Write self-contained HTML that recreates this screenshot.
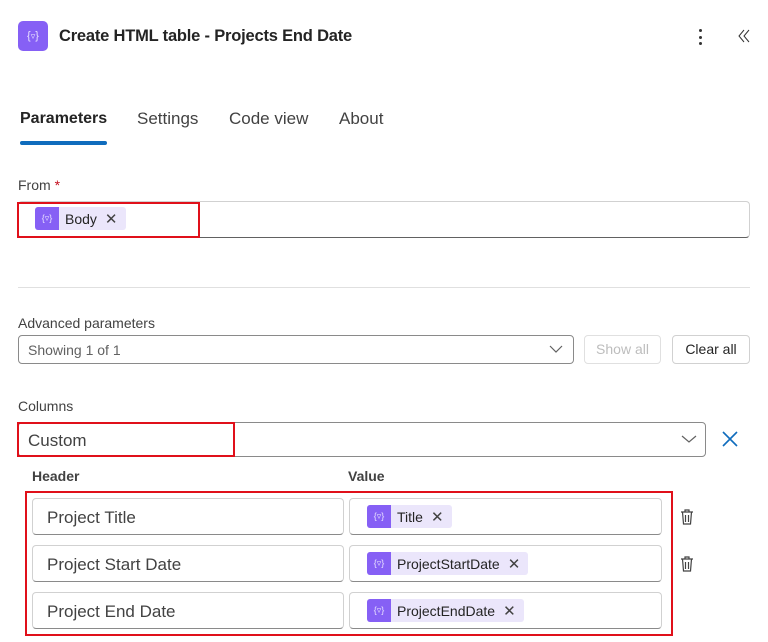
<!DOCTYPE html>
<html><head><style>
*{box-sizing:border-box;margin:0;padding:0}
body{width:768px;height:642px;background:#fff;font-family:"Liberation Sans",sans-serif;color:#242424;position:relative;overflow:hidden}
.a{position:absolute}
.ico{background:#8660f5;border-radius:4px;color:#e8e0ff;font-size:9px;display:flex;align-items:center;justify-content:center}
.inp{position:absolute;border:1px solid #d1d1d1;border-bottom-color:#616161;border-radius:4px;background:#fff}
.chip{position:absolute;background:#ebe6fb;border-radius:3px;height:23px;display:flex;align-items:center;font-size:14px;color:#242424}
.chip .ico{width:24px;height:23px;border-radius:3px 0 0 3px;margin-right:6px}
.chip .x{margin:0 8px 0 8px;font-size:15px;color:#424242}
.lbl{position:absolute;font-size:14px;color:#424242}
.red{position:absolute;border:2px solid #e0101a}
.txt{position:absolute;font-size:17px;color:#424242}
</style></head><body>
<div class="a ico" style="left:18px;top:21px;width:30px;height:30px;border-radius:5px;font-size:11px">{<span style="font-size:9px">▿</span>}</div>
<div class="a" style="left:59px;top:27px;font-size:16.5px;font-weight:bold;color:#242424;letter-spacing:-0.2px">Create HTML table - Projects End Date</div>
<div class="a" style="left:699px;top:29px;width:3px;height:16px;display:flex;flex-direction:column;justify-content:space-between;align-items:center"><i style="width:3px;height:3px;background:#333;border-radius:50%"></i><i style="width:3px;height:3px;background:#333;border-radius:50%"></i><i style="width:3px;height:3px;background:#333;border-radius:50%"></i></div>
<svg class="a" style="left:738px;top:29px" width="12" height="14" viewBox="0 0 12 14"><path d="M6 1L1 7l5 6M11 1L6 7l5 6" fill="none" stroke="#333" stroke-width="1"/></svg>
<div class="a" style="left:20px;top:110px;font-size:16px;font-weight:bold;color:#242424">Parameters</div>
<div class="a" style="left:137px;top:109px;font-size:17px;color:#424242">Settings</div>
<div class="a" style="left:229px;top:109px;font-size:17px;color:#424242">Code view</div>
<div class="a" style="left:339px;top:109px;font-size:17px;color:#424242">About</div>
<div class="a" style="left:20px;top:141px;width:87px;height:4px;background:#0f6cbd;border-radius:2px"></div>
<div class="lbl" style="left:18px;top:177px">From <span style="color:#c50f1f">*</span></div>
<div class="inp" style="left:18px;top:201px;width:732px;height:37px"></div>
<div class="chip" style="left:35px;top:207px"><div class="ico">{▿}</div>Body<span class="x">✕</span></div>
<div class="red" style="left:17px;top:202px;width:183px;height:36px"></div>
<div class="a" style="left:18px;top:287px;width:732px;height:1px;background:#e0e0e0"></div>
<div class="lbl" style="left:18px;top:315px">Advanced parameters</div>
<div class="inp" style="left:18px;top:335px;width:556px;height:29px;border-color:#8a8a8a"></div>
<div class="a" style="left:28px;top:342px;font-size:14px;color:#616161">Showing 1 of 1</div>
<svg class="a" style="left:549px;top:344px" width="14" height="10"><path d="M1 2l6 6 6-6" fill="none" stroke="#616161" stroke-width="1.2"/></svg>
<div class="a" style="left:584px;top:335px;width:77px;height:29px;border:1px solid #e0e0e0;border-radius:4px;font-size:14px;color:#bdbdbd;text-align:center;line-height:27px">Show all</div>
<div class="a" style="left:672px;top:335px;width:78px;height:29px;border:1px solid #d1d1d1;border-radius:4px;font-size:14px;color:#242424;text-align:center;line-height:27px">Clear all</div>
<div class="lbl" style="left:18px;top:398px">Columns</div>
<div class="inp" style="left:18px;top:422px;width:688px;height:35px;border-color:#8a8a8a"></div>
<div class="txt" style="left:28px;top:431px;color:#424242">Custom</div>
<svg class="a" style="left:681px;top:434px" width="16" height="10"><path d="M1 2l7 6 7-6" fill="none" stroke="#616161" stroke-width="1.2"/></svg>
<svg class="a" style="left:722px;top:431px" width="16" height="16"><path d="M1 1l14 14M15 1L1 15" stroke="#0f6cbd" stroke-width="1.6"/></svg>
<div class="red" style="left:17px;top:422px;width:218px;height:35px"></div>
<div class="a" style="left:32px;top:468px;font-size:14px;font-weight:bold;color:#424242">Header</div>
<div class="a" style="left:348px;top:468px;font-size:14px;font-weight:bold;color:#424242">Value</div>

<div class="inp" style="left:32px;top:498px;width:312px;height:37px;border-color:#d1d1d1 #d1d1d1 #8a8a8a"></div>
<div class="txt" style="left:47px;top:508px">Project Title</div>
<div class="inp" style="left:349px;top:498px;width:313px;height:37px;border-color:#d1d1d1 #d1d1d1 #8a8a8a"></div>
<div class="chip" style="left:367px;top:505px"><div class="ico">{▿}</div>Title<span class="x">✕</span></div>

<div class="inp" style="left:32px;top:545px;width:312px;height:37px;border-color:#d1d1d1 #d1d1d1 #8a8a8a"></div>
<div class="txt" style="left:47px;top:555px">Project Start Date</div>
<div class="inp" style="left:349px;top:545px;width:313px;height:37px;border-color:#d1d1d1 #d1d1d1 #8a8a8a"></div>
<div class="chip" style="left:367px;top:552px"><div class="ico">{▿}</div>ProjectStartDate<span class="x">✕</span></div>

<div class="inp" style="left:32px;top:592px;width:312px;height:37px;border-color:#d1d1d1 #d1d1d1 #8a8a8a"></div>
<div class="txt" style="left:47px;top:602px">Project End Date</div>
<div class="inp" style="left:349px;top:592px;width:313px;height:37px;border-color:#d1d1d1 #d1d1d1 #8a8a8a"></div>
<div class="chip" style="left:367px;top:599px"><div class="ico">{▿}</div>ProjectEndDate<span class="x">✕</span></div>

<div class="red" style="left:25px;top:491px;width:648px;height:145px"></div>
<svg class="a" style="left:679px;top:508px" width="16" height="18" viewBox="0 0 16 18"><path d="M2 4h12M6 4V2h4v2M3.5 4l1 12h7l1-12M6.5 7v7M9.5 7v7" fill="none" stroke="#424242" stroke-width="1.2"/></svg>
<svg class="a" style="left:679px;top:555px" width="16" height="18" viewBox="0 0 16 18"><path d="M2 4h12M6 4V2h4v2M3.5 4l1 12h7l1-12M6.5 7v7M9.5 7v7" fill="none" stroke="#424242" stroke-width="1.2"/></svg>
</body></html>
